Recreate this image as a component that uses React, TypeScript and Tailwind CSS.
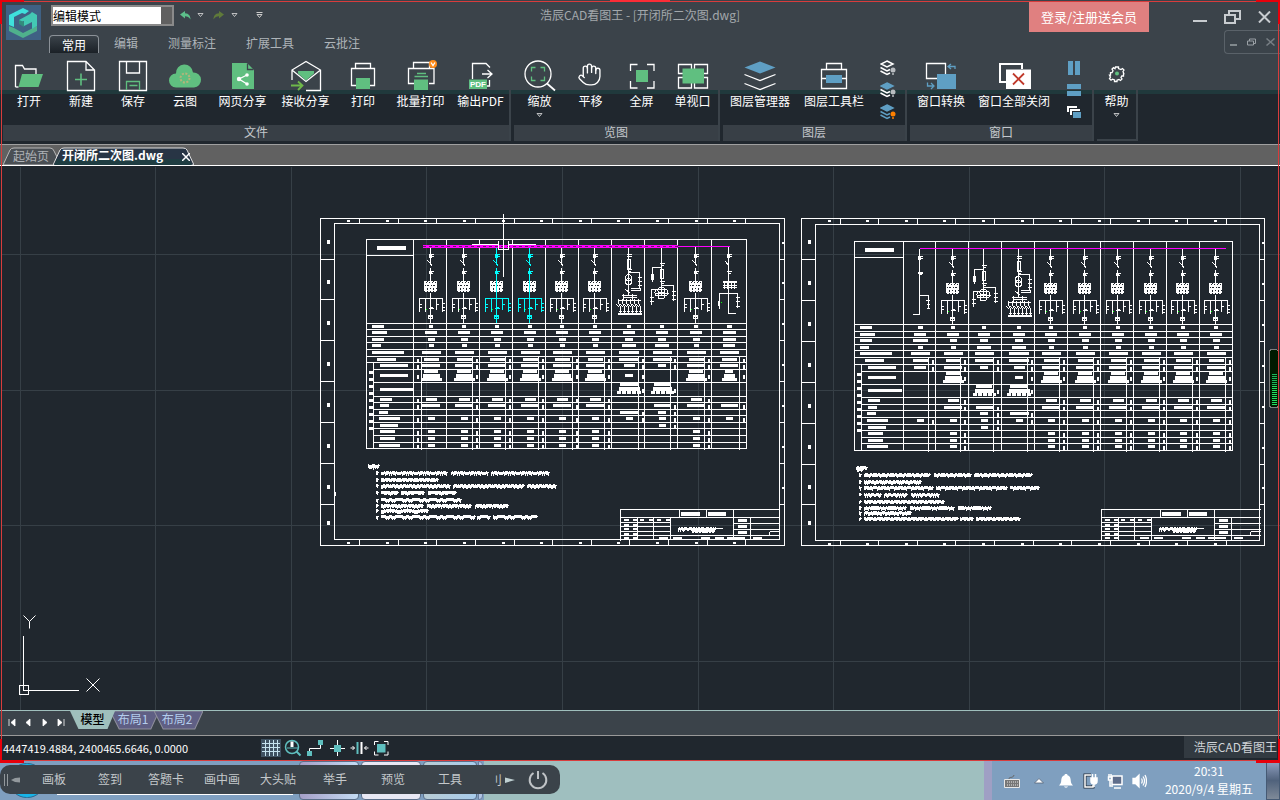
import React, { useState } from 'react';
import { Hand } from 'lucide-react';

type FeederKind = 'feeder' | 'pt' | 'transformer' | 'tail' | 'incoming';

interface Bay {
  x: number;
  kind: FeederKind;
  active?: boolean;
}

interface SheetData {
  outer: [number, number, number, number];
  inner: [number, number, number, number];
  ticks: number[];
  sideTicks: number[];
  left: number;
  right: number;
  top: number;
  labelLine: number;
  columns: number[];
  subColumns: number[];
  rows: number[];
  bays: Bay[];
  dy: number;
}

const sheets: SheetData[] = [
  {
    outer: [320, 218, 784, 545],
    inner: [334, 223, 779, 539],
    ticks: [359, 398, 436, 475, 514, 552, 591, 629, 668, 707, 745],
    sideTicks: [259, 299, 340, 381, 422, 463, 504],
    left: 366,
    right: 746,
    top: 239,
    labelLine: 255,
    columns: [413, 446, 479, 512, 545, 578, 611, 644, 677, 711],
    subColumns: [421, 472, 505, 538, 572, 604, 638, 670, 704, 739],
    rows: [323, 329, 336, 342, 349, 356, 362, 369, 382, 396, 402, 409, 415, 422, 428, 435, 442, 448],
    bays: [
      { x: 430, kind: 'feeder' },
      { x: 463, kind: 'feeder' },
      { x: 496, kind: 'feeder', active: true },
      { x: 529, kind: 'feeder', active: true },
      { x: 561, kind: 'feeder' },
      { x: 594, kind: 'feeder' },
      { x: 628, kind: 'pt' },
      { x: 661, kind: 'transformer' },
      { x: 695, kind: 'feeder' },
      { x: 728, kind: 'tail' },
    ],
    dy: 0,
  },
  {
    outer: [801, 218, 1264, 545],
    inner: [815, 224, 1259, 540],
    ticks: [840, 878, 917, 955, 994, 1033, 1071, 1110, 1149, 1187, 1226],
    sideTicks: [259, 300, 341, 382, 423, 464, 504],
    left: 854,
    right: 1232,
    top: 241,
    labelLine: 257,
    columns: [903, 935, 968, 1001, 1034, 1067, 1100, 1133, 1166, 1199],
    subColumns: [928, 960, 993, 1027, 1059, 1093, 1126, 1159, 1192, 1225],
    rows: [324, 331, 337, 344, 350, 357, 364, 371, 384, 397, 404, 410, 417, 424, 430, 437, 443, 450],
    bays: [
      { x: 919, kind: 'incoming' },
      { x: 952, kind: 'feeder' },
      { x: 983, kind: 'transformer' },
      { x: 1018, kind: 'pt' },
      { x: 1050, kind: 'feeder' },
      { x: 1084, kind: 'feeder' },
      { x: 1117, kind: 'feeder' },
      { x: 1150, kind: 'feeder' },
      { x: 1182, kind: 'feeder' },
      { x: 1215, kind: 'feeder' },
    ],
    dy: 2,
  },
];

// Width of the entry in each table row, 0 for an empty cell
const cellWidths: Record<FeederKind, number[]> = {
  feeder: [4, 12, 7, 5, 19, 15, 18, 20, 0, 11, 18, 0, 7, 0, 7, 7, 7],
  pt: [4, 12, 8, 14, 20, 20, 11, 8, 24, 0, 0, 19, 7, 0, 0, 0, 0],
  transformer: [4, 12, 8, 14, 19, 19, 8, 0, 22, 0, 17, 8, 7, 7, 0, 0, 0],
  tail: [5, 13, 13, 12, 19, 15, 18, 14, 0, 0, 17, 0, 7, 0, 0, 0, 0],
  incoming: [5, 12, 15, 5, 19, 15, 12, 0, 0, 0, 0, 0, 7, 0, 0, 0, 0],
};

const rowLabels = [
  [5, 12], [5, 15], [5, 12], [5, 9], [5, 32], [10, 19], [13, 28], [13, 28], [13, 34],
  [13, 12], [13, 9], [12, 9], [12, 21], [13, 18], [13, 15], [13, 15], [12, 21],
];

const noteLines: { y: number; parts: [number, number][] }[] = [
  { y: 472, parts: [[10, 12], [15, 81], [85, 122], [125, 183]] },
  { y: 479, parts: [[10, 12], [15, 72]] },
  { y: 485, parts: [[10, 12], [15, 84], [87, 158], [161, 190]] },
  { y: 492, parts: [[10, 12], [15, 32], [35, 58], [62, 90]] },
  { y: 499, parts: [[10, 12], [15, 95]] },
  { y: 505, parts: [[10, 12], [15, 57], [61, 105], [109, 142]] },
  { y: 510, parts: [[10, 12], [15, 62]] },
  { y: 516, parts: [[10, 12], [15, 109], [111, 124], [127, 171]] },
];

// Lettering too small to resolve at this zoom, drawn as vertical strokes
const scribble = (from: number, to: number, y: number) => {
  let d = `M${from} ${y}H${to}`;
  for (let x = from; x < to; x++) {
    const n = (x * x * 7 + x * 31 + y * 13) % 17;
    const top = y - (n > 11 ? 1 : 2);
    d += `M${x} ${top}v${n % 3 === 0 ? 3 : 4}`;
  }
  return d;
};

const Feeder: React.FC<{ x: number; color: string }> = ({ x, color }) => (
  <g stroke={color} fill="none">
    <path d={`M${x} 246V262M${x} 267V280M${x} 292V322`} />
    <path d={`M${x - 2} 254h5M${x - 2} 256h5M${x - 1} 253v4M${x + 1} 253v4M${x - 3} 260l2 2l3 4M${x - 2} 271h5M${x - 1} 273h3M${x + 1} 270v3M${x - 1} 270v3`} />
    <rect x={x - 6} y="281" width="12" height="10" fill="#fff" stroke="#fff" />
    <path
      d={`M${x - 5} 282h12M${x - 6} 285h13M${x - 4} 288h11M${x - 7} 291h14`}
      stroke="#20272e"
      strokeDasharray="1 2"
    />
    <path d={`M${x - 3} 280v12M${x + 3} 280v12`} stroke="#20272e" strokeDasharray="1 3" />
    {color !== '#fff' && <path d={`M${x} 280v12`} />}
    <path d={`M${x - 11} 311V298H${x + 12}V311M${x - 5} 298v13M${x + 6} 298v11`} />
    <path d={`M${x - 12} 304h3M${x - 12} 307h3M${x + 11} 303h3M${x + 11} 307h3M${x + 11} 310h3M${x + 5} 304h3M${x - 1} 307h3M${x - 2} 308h5`} />
    <path d={`M${x - 2} 315h4v3h-4zM${x - 3} 316h5`} />
    <path d={`M${x - 5} 309h1`} stroke="#00ff00" />
  </g>
);

const PtBay: React.FC<{ x: number }> = ({ x }) => (
  <g fill="none">
    <path d={`M${x} 246V295M${x - 2} 254h5M${x - 2} 256h5M${x - 1} 259h3v9h-3zM${x - 2} 269h5M${x - 1} 271h3`} />
    <circle cx={x} cy="277" r="3" />
    <circle cx={x} cy="281" r="3" />
    <path d={`M${x} 272H${x + 11}V288M${x + 9} 277h4M${x + 9} 281h4M${x + 9} 285h4M${x + 2} 288h10v2h-10M${x - 3} 289l5 4`} />
    <path d={`M${x - 7} 295h15M${x - 6} 297h14M${x - 5} 293v6M${x + 4} 293v6M${x - 10} 300h22`} />
    {[-10, -6, -2, 2, 6, 10].map(o => (
      <path key={o} d={`M${x + o} 298v4l2 5v5M${x + o - 2} 304l3 3M${x + o} 311h3`} />
    ))}
    <path d={`M${x - 11} 313h24`} strokeWidth="2" />
  </g>
);

const TransformerBay: React.FC<{ x: number }> = ({ x }) => (
  <g fill="none">
    <path d={`M${x} 246V292M${x - 2} 263h5M${x - 1} 265h3M${x - 1} 269h3v9h-3zM${x - 2} 281h5M${x - 1} 283h3`} />
    <path d={`M${x} 267H${x - 9}V281M${x - 10} 273v6M${x - 8} 273v6M${x} 285H${x + 12}V300M${x + 10} 291h4M${x + 10} 295h4M${x + 10} 299h4`} />
    <path d={`M${x - 4} 289H${x - 10}V304M${x - 12} 297h4M${x - 12} 301h4`} />
    <circle cx={x - 3} cy="292" r="3.5" />
    <circle cx={x + 3} cy="292" r="3.5" />
    <circle cx={x} cy="290" r="3.5" />
    <circle cx={x} cy="295" r="3.5" />
    <path d={`M${x - 6} 293h13`} />
  </g>
);

const TailBay: React.FC<{ x: number }> = ({ x }) => (
  <g fill="none">
    <path d={`M${x} 246V313H${x + 7}M${x - 2} 254h5M${x - 2} 256h5M${x - 1} 253v4M${x + 1} 253v4M${x - 3} 261l3 4M${x - 2} 271h5M${x - 1} 273h3`} />
    <path d={`M${x - 6} 281h14M${x - 6} 282h14M${x - 6} 285h14M${x - 6} 287h14M${x - 4} 280v8M${x - 1} 280v8M${x + 3} 280v8M${x + 6} 280v8`} />
    <path d={`M${x - 9} 308V293H${x + 9}V307M${x - 10} 300v5M${x + 7} 297h4M${x + 7} 301h4M${x + 7} 306h4`} />
    <path d={`M${x - 8} 302h1`} stroke="#00ff00" />
  </g>
);

const IncomingBay: React.FC<{ x: number }> = ({ x }) => (
  <path
    fill="none"
    d={`M${x} 246V312H${x - 7}M${x - 2} 254h5M${x - 2} 256h5M${x - 1} 253v4M${x + 1} 253v4M${x - 2} 270h5M${x - 2} 271h5M${x - 1} 272h3M${x} 293h9V306M${x + 6} 298h4M${x + 7} 302h3M${x + 7} 306h3`}
  />
);

const TitleBlock: React.FC<{ dx: number }> = ({ dx }) => (
  <g transform={`translate(${dx} 0)`}>
    <path
      fill="none"
      d="M620 540V509H779M620 517H779M620 522H670M620 526H670M620 531H670M620 535H779M637 517V539M653 517V539M670 517V539M679 509V517M706 509V517M733 509V539M750 517V539M733 523H779M733 529H779M769 531V535M769 531H779"
    />
    <g stroke="none" fill="#fff">
      <rect x="680" y="511" width="19" height="4" />
      <rect x="707" y="511" width="18" height="4" />
      {[518, 523, 527, 532, 536].map(y => (
        <React.Fragment key={y}>
          <rect x="623" y={y} width="5" height="2" />
          <rect x="632" y={y} width="4" height="2" />
        </React.Fragment>
      ))}
      {[639, 648, 656, 665].map(x => <rect key={x} x={x} y="518" width="4" height="2" />)}
      {[518, 524, 530].map(y => <rect key={y} x="737" y={y} width="9" height="3" />)}
      {[658, 672, 700, 714, 726, 735, 752].map(x => <rect key={x} x={x} y="536" width="9" height="2" />)}
    </g>
    <path d={scribble(678, 690, 528) + scribble(690, 716, 528) + scribble(692, 714, 530)} />
    <path d="M700 528h22" />
  </g>
);

const Sheet: React.FC<{ sheet: SheetData; dx: number }> = ({ sheet, dx }) => {
  const [ox, oy, ox2, oy2] = sheet.outer;
  const [ix, iy, ix2, iy2] = sheet.inner;
  const { left, right, rows, dy } = sheet;
  const bottom = rows[rows.length - 1];
  const busY = 246 + dy;

  return (
    <g stroke="#fff">
      <rect x={ox} y={oy} width={ox2 - ox} height={oy2 - oy} fill="none" />
      <rect x={ix} y={iy} width={ix2 - ix} height={iy2 - iy} fill="none" />
      {sheet.ticks.map(x => (
        <g key={x}>
          <path d={`M${x} ${oy}V${iy}M${x} ${iy2}V${oy2}`} />
          <path d={`M${x - 13} ${oy + 2}h3M${x - 13} ${iy2 + 3}h3`} strokeWidth="2" />
        </g>
      ))}
      {sheet.sideTicks.map(y => (
        <g key={y}>
          <path d={`M${ox} ${y}H${ix}M${ix2} ${y}H${ox2}`} />
          <path d={`M${ox + 8} ${y - 20}v4`} strokeWidth="3" />
          <path d={`M${ix2 + 3} ${y - 18}v2`} strokeWidth="2" />
        </g>
      ))}
      <path d={`M${ox + 8} 520v4`} strokeWidth="3" />

      <rect x={left} y={sheet.top} width={right - left} height={bottom - sheet.top} fill="none" />
      <path d={`M${left} ${sheet.labelLine}H${sheet.columns[0]}M${left + 7} ${rows[6]}V${bottom}`} />
      <path d={`M${left + 10} ${sheet.labelLine - 8}h29`} strokeWidth="4" />
      {sheet.columns.map(x => <path key={x} d={`M${x} ${sheet.top}V${bottom}`} />)}
      {sheet.subColumns.map(x => <path key={x} d={`M${x} ${rows[5]}V${bottom + 1}`} />)}
      {rows.map((y, i) => <path key={y} d={`M${i > 6 ? left + 7 : left} ${y}H${right}`} />)}
      {Array.from({ length: 9 }, (_, i) => (
        <path key={i} d={`M${left + 2} ${rows[7] + 3 + i * 7}h4`} strokeWidth="3" />
      ))}
      {rowLabels.map(([offset, width], i) => (
        <path key={i} d={`M${left + offset} ${(rows[i] + rows[i + 1]) >> 1}h${width}`} strokeWidth="3" />
      ))}

      {sheet.bays.map((bay, b) =>
        cellWidths[bay.kind].map((width, i) => {
          if (!width) return null;
          const y = (rows[i] + rows[i + 1]) >> 1;
          const half = width >> 1;
          const unitX = sheet.subColumns[b] + (b === 0 && !dx ? -4 : 4);
          const unit = i > 4 && (
            <path d={`M${unitX} ${y - 1}v4`} strokeWidth="2" />
          );
          if ((i === 7 || i === 8) && width > 8) {
            return (
              <g key={i}>
                <path d={`M${bay.x - half + 3} ${rows[i] + 2}h${width - 6}`} strokeWidth="3" />
                <path d={`M${bay.x - half + 2} ${rows[i] + 6}h${width - 3}`} strokeWidth="4" />
                <path d={`M${bay.x - half} ${rows[i] + 10}h${width + 1}`} strokeWidth="3" strokeDasharray={i === 8 ? '4 1' : undefined} />
                {unit}
              </g>
            );
          }
          return (
            <g key={i}>
              <path d={`M${bay.x - half} ${y}h${width}`} strokeWidth="3" />
              {unit}
            </g>
          );
        })
      )}

      <path d={scribble(left + 2, left + 13, 465 + dy) + scribble(left + 3, left + 10, 466 + dy)} />
      {noteLines.map(line => (
        <path key={line.y} d={line.parts.map(([a, b]) => scribble(left + a - (dx ? 5 : 0), left + b - (dx ? 5 : 0), line.y + dy)).join('')} />
      ))}

      <g transform={`translate(0 ${dy})`}>
        {sheet.bays.map(bay => {
          switch (bay.kind) {
            case 'pt': return <PtBay key={bay.x} x={bay.x} />;
            case 'transformer': return <TransformerBay key={bay.x} x={bay.x} />;
            case 'tail': return <TailBay key={bay.x} x={bay.x} />;
            case 'incoming': return <IncomingBay key={bay.x} x={bay.x} />;
            default: return <Feeder key={bay.x} x={bay.x} color={bay.active ? '#00ffff' : '#fff'} />;
          }
        })}
      </g>

      {dx ? (
        <path d={`M919 ${busY}H1225`} stroke="#ff00ff" />
      ) : (
        <>
          <path d={`M422 ${busY}H677`} stroke="#ff00ff" strokeWidth="3" />
          <path d={`M422 ${busY}H677`} stroke="#5c1f60" strokeDasharray="3 3" />
          <path d={`M677 ${busY}H729`} stroke="#ff00ff" />
        </>
      )}
      <TitleBlock dx={dx} />
    </g>
  );
};

const Drawing: React.FC = () => (
  <svg
    className="block h-full min-h-[544px] w-full"
    viewBox="0 166 1280 544"
    preserveAspectRatio="xMidYMid slice"
    shapeRendering="crispEdges"
    role="img"
    aria-label="开闭所二次图"
  >
    <g transform="translate(0.5 0.5)">
      <path
        stroke="#363f46"
        d="M20 166V710M155 166V710M291 166V710M426 166V710M562 166V710M698 166V710M833 166V710M969 166V710M1104 166V710M1240 166V710M0 254H1280M0 390H1280M0 525H1280M0 661H1280"
      />
      <Sheet sheet={sheets[0]} dx={0} />
      <Sheet sheet={sheets[1]} dx={481} />
      <path d="M335 491v4M815 493v3" stroke="#fff" />
      <g stroke="#fff" fill="none">
        <path d="M503 213V276M471 244H498M508 244H535M498 240v9h10v-9" />
      </g>
      <g stroke="#fff" fill="none">
        <path d="M23 635V690H78M19 685h9v9h-9z" />
        <path d="M23 615l6 6l6 -6M29 621v7M86 678l13 13M99 678l-13 13" shapeRendering="auto" />
      </g>
      <rect x="1269" y="349" width="9" height="58" rx="3" fill="#001a00" stroke="#808080" />
      {Array.from({ length: 16 }, (_, i) => (
        <path key={i} d={`M1271 ${374 + i * 2}h5`} stroke={i < 6 ? '#18b85a' : '#20e060'} />
      ))}
    </g>
  </svg>
);

const green = '#60bf80';
const blue = '#5f9fc4';

const RibbonIcon: React.FC<{ children: React.ReactNode }> = ({ children }) => (
  <svg width="32" height="32" viewBox="0 0 32 32" fill="none" stroke="#fff" strokeWidth="1.3" className="shrink-0 overflow-visible" aria-hidden="true">
    {children}
  </svg>
);

interface Tool {
  label: string;
  icon: React.ReactNode;
  width: string;
  menu?: boolean;
}

const fileTools: Tool[] = [
  {
    label: '打开',
    width: 'w-[52px]',
    icon: <><path d="M2.5 27V5.500h7l2 3.500h11.500v5" /><path d="M2.500 27h3" /><path d="M9 14H30L25.500 27H5.500z" fill={green} stroke="none" /></>,
  },
  {
    label: '新建',
    width: 'w-[52px]',
    icon: <><path d="M2.500 1.500H21L29.500 10V30.500H2.500zM21 1.500V10H29.500" /><path d="M16 13.500v12M10 19.500h12" stroke={green} strokeWidth="1.600" /></>,
  },
  {
    label: '保存',
    width: 'w-[52px]',
    icon: <><path d="M2.500 1.500h27v29h-27zM9.500 1.500v11.500h13V1.500" /><path d="M9.500 30V21.500h13V30M12.500 25.500h8" stroke={green} /></>,
  },
  {
    label: '云图',
    width: 'w-[52px]',
    icon: <><path d="M7 27.500a7 7 0 0 1 0-14 8.500 8.500 0 0 1 17-1 7.500 7.500 0 0 1 1 15z" fill={green} stroke="none" /><circle cx="16" cy="18" r="4.500" stroke="#b5b57a" strokeWidth="2" strokeDasharray="2 1.500" /></>,
  },
  {
    label: '网页分享',
    width: 'w-[63px]',
    icon: <><path d="M5 3H20L27 10V29H5z" fill={green} stroke="none" /><path d="M20.500 3.500v6h6" stroke="#3b434a" /><path d="M20 15l-8 4 8 5" /><circle cx="20" cy="15" r="1.800" fill="#fff" stroke="none" /><circle cx="12" cy="19" r="2.200" fill="#fff" stroke="none" /><circle cx="20" cy="24" r="1.800" fill="#fff" stroke="none" /></>,
  },
  {
    label: '接收分享',
    width: 'w-[63px]',
    icon: <><path d="M2 20V10L16 1.500L30.500 10V30.500H16M2 10l14 11.500L30.500 10" /><path d="M8 11H24V13.500L16 20.500L8 13.500z" fill={green} stroke="none" /><path d="M1 25.500H12M8 21.500l4.500 4-4.500 4.500" stroke="#6fb84a" strokeWidth="1.800" /></>,
  },
  {
    label: '打印',
    width: 'w-[52px]',
    icon: <><path d="M8.500 8.500V3.500h15v5M9 25.500H4.500v-17h23v17H23" /><path d="M9 18h14v11H9z" fill={green} stroke="none" /></>,
  },
  {
    label: '批量打印',
    width: 'w-[63px]',
    icon: <><path d="M8.500 8.500V2.500h16v6M9 23.500H3.500v-15h25.500v15H24" /><path d="M12 13.500h9M9.500 16.500h13.500" stroke={green} /><path d="M9 19.500h14V30H9z" fill={green} stroke="none" /><circle cx="28" cy="4" r="4" fill="#ff8c1a" stroke="none" /><path d="M26 2.500l2 3 2-3" /></>,
  },
  {
    label: '输出PDF',
    width: 'w-[57px]',
    icon: <><path d="M7.500 19V3.500H21l4 4M24.500 20v6H22M17 14h10M22.500 10l4.500 4-4.500 4" /><path d="M4 19.500h18V29H4z" fill={green} stroke="none" /><text x="5" y="27" fontSize="8" fontWeight="700" fill="#fff" stroke="none" fontFamily="Liberation Sans">PDF</text></>,
  },
];

const viewTools: Tool[] = [
  {
    label: '缩放',
    width: 'w-[51px]',
    menu: true,
    icon: <><circle cx="14" cy="14" r="13" /><path d="M23 23.500l8 7" strokeWidth="1.700" /><path d="M7.500 11.500v-4h4M16.500 7.500h4v4M20.500 16.500v4h-4M11.500 20.500h-4v-4" stroke={green} /></>,
  },
  { label: '平移', width: 'w-[51px]', icon: <Hand x={2} y={2} width={25} height={25} strokeWidth={1.3} /> },
  {
    label: '全屏',
    width: 'w-[51px]',
    icon: <><path d="M4.500 11v-6.500h7M21 4.500h7V11M28 21v7h-7M11.500 28h-7v-7" /><path d="M10 10h12v12H10z" fill={green} stroke="none" /></>,
  },
  {
    label: '单视口',
    width: 'w-[51px]',
    icon: <><path d="M1.500 4.500h13v9h-13zM17.500 4.500h13v9h-13zM1.500 17.500h13V28h-13zM17.500 17.500h13V28h-13z" /><path d="M5.500 8.500h21.500v15H5.500z" fill={green} stroke="none" /></>,
  },
];

const layerTools: Tool[] = [
  {
    label: '图层管理器',
    width: 'w-[74px]',
    icon: <><path d="M16 1.500L31.500 7.500L16 13.500L.500 7.500z" fill={blue} stroke="none" /><path d="M.500 14.500L16 20.500L31.500 14.500M.500 23.500L16 29.500L31.500 23.500" /></>,
  },
  {
    label: '图层工具栏',
    width: 'w-[74px]',
    icon: <><path d="M3.500 9.500h25v19h-25zM8.500 9.500v-6h15v6M3.500 18.500h25" /><path d="M8 15h16v8H8z" fill={blue} stroke="none" /></>,
  },
];

const windowTools: Tool[] = [
  {
    label: '窗口转换',
    width: 'w-[62px]',
    icon: <><path d="M12 18.500H1.500V3.500h19V14" /><path d="M12 14h19v15H12z" fill={blue} stroke="none" /><path d="M30 9V6.500h-6M26 4l-3 2.500L26 9M2.500 22.500V26H8M6 23l3 3-3 3" stroke={blue} /></>,
  },
  {
    label: '窗口全部关闭',
    width: 'w-[84px]',
    icon: <><path d="M8 22H2V4h22v5" strokeWidth="2" /><path d="M8 9.500h25V29H8z" fill="#fff" stroke="none" /><path d="M15 13.500l11 11M26 13.500l-11 11" stroke="#c0392b" strokeWidth="1.800" /></>,
  },
];

const helpTools: Tool[] = [
  {
    label: '帮助',
    width: 'w-[39px]',
    menu: true,
    icon: <><path d="M14.500 7h3v1.500l2.500 1 1.500-1 1.500 1.500-1 1.500.8 2H22.500v2.500h-1.700l-.8 1.500 1 1.500-1.500 1.500-1.500-1-2 .8v1.200h-2.500v-1.500l-2-.8-1.500 1-1.500-1.500 1-1.500-1-2H9.500v-2.500h1.500l1-2-1-1.500 1.500-1.500 1.500 1z" /><circle cx="16" cy="13.500" r="2" fill={green} stroke="none" /></>,
  },
];

const DownArrow: React.FC = () => (
  <svg width="7" height="5" viewBox="0 0 7 5" aria-hidden="true"><path d="M1 .500h5L3.500 3.500z" fill="#3b434a" stroke="#ddd" strokeWidth=".8" /></svg>
);

const ToolButton: React.FC<{ tool: Tool }> = ({ tool }) => (
  <button className={`${tool.width} flex flex-col items-center pt-1 text-white whitespace-nowrap hover:bg-white/10`}>
    <RibbonIcon>{tool.icon}</RibbonIcon>
    <span className="leading-[18px]">{tool.label}</span>
    {tool.menu && <span className="pt-[3px]"><DownArrow /></span>}
  </button>
);

const RibbonGroup: React.FC<{ title?: string; tools: Tool[]; children?: React.ReactNode }> = ({ title, tools, children }) => (
  <section className="mr-[3px] flex flex-col border-r-2 border-[#3b434a]">
    <div className="flex h-[69px]">
      {tools.map(tool => <ToolButton key={tool.label} tool={tool} />)}
      {children}
    </div>
    {title ? (
      <h2 className="h-4 bg-[#383f46] text-center leading-[14px] text-[#c4c8cc]">{title}</h2>
    ) : (
      <div className="h-4 border-b-2 border-[#3b434a]" />
    )}
  </section>
);

const LayerMini: React.FC<{ label: string; top: string; line: string; bulb: string }> = ({ label, top, line, bulb }) => (
  <button aria-label={label}>
    <svg width="16" height="16" viewBox="0 0 16 16" fill="none" stroke={line} strokeWidth="1.500">
      <path d="M7 1L13 4L7 7L1 4z" fill={top} stroke={top === 'none' ? line : top} />
      <path d="M.500 7.500L7 11L10 9.500M.500 11L7 14.500L10 13" />
      <circle cx="13" cy="10" r="2.500" fill={bulb} stroke="none" />
      <path d="M12 14h2" stroke={bulb} />
    </svg>
  </button>
);

const TitleBar: React.FC = () => {
  const [tab, setTab] = useState('常用');
  const [mode, setMode] = useState('编辑模式');

  return (
    <div className="grid h-14 grid-cols-[1fr_auto_1fr]">
      <div className="flex pt-[5px] pl-[6px]">
        <svg width="35" height="35" viewBox="0 0 35 35" className="shrink-0" aria-label="浩辰CAD看图王">
          <rect width="35" height="35" fill="#3f6184" />
          <path d="M3 10L17 3L23 6L19 9L16 8L8 12V22L3 20z" fill="#3fe0dc" />
          <path d="M3 21L8 23L17 28L31 21V26L17 33L3 26z" fill="#4fb08c" />
          <path d="M26 7L31 10V21L26 24V17L18 21V16L13 18V15L24 9z" fill="#43c8b4" />
          <path d="M13 15l5 2v5l-5-3z" fill="#328a7c" />
        </svg>
        <div className="ml-2">
          <div className="flex h-[21px] items-center pl-0.5">
            <div className="relative">
              <select
                aria-label="工作模式"
                value={mode}
                onChange={e => setMode(e.target.value)}
                className="block h-[21px] w-[123px] appearance-none border-2 border-[#8a8a8a] bg-white text-black"
              >
                <option>编辑模式</option>
                <option>览图模式</option>
              </select>
              <span className="pointer-events-none absolute inset-y-0.5 right-0.5 w-[11px] bg-[#606060]" />
            </div>
            <button aria-label="撤销" className="ml-[6px]">
              <svg width="11" height="9" viewBox="0 0 11 9"><path d="M0 3.500L5 0v2.200C9 2.500 10.500 5 10.500 8.500 9 6 7.500 5.300 5 5.300V7.500z" fill="#5cbf8a" /></svg>
            </button>
            <button aria-label="撤销列表" className="ml-[6px]"><DownArrow /></button>
            <button aria-label="重做" className="ml-[9px]">
              <svg width="11" height="9" viewBox="0 0 11 9"><path d="M11 3.500L6 0v2.200C2 2.500.5 5 .5 8.500 2 6 3.500 5.300 6 5.300V7.500z" fill="#5f7a3a" /></svg>
            </button>
            <button aria-label="重做列表" className="ml-[7px]"><DownArrow /></button>
            <button aria-label="自定义快速访问" className="ml-[18px]">
              <svg width="7" height="7" viewBox="0 0 7 7" fill="none" stroke="#ccc"><path d="M.500 .500h6M1 2.500h5L3.500 5.500z" /></svg>
            </button>
          </div>
          <nav className="mt-[9px] flex h-[18px] leading-4 whitespace-nowrap">
            {['常用', '编辑', '测量标注', '扩展工具', '云批注'].map(name => (
              <button
                key={name}
                onClick={() => setTab(name)}
                className={
                  name === tab
                    ? 'rounded-t border border-b-0 border-[#8b9197] bg-linear-to-b from-[#3b434a] to-[#1b2127] px-[12px] leading-[14px] text-white'
                    : 'px-[15px] pb-0.5 text-[#aeb4b9]'
                }
              >
                {name}
              </button>
            ))}
          </nav>
        </div>
      </div>

      <h1 className="pt-[6px] leading-[18px] whitespace-nowrap text-[#a3a8ac]">浩辰CAD看图王 - [开闭所二次图.dwg]</h1>

      <div className="flex flex-col items-end">
        <div className="flex pt-0.5 pr-[9px]">
          <button className="h-[30px] w-[120px] bg-[#e08080] text-[13px] text-white">登录/注册送会员</button>
          <div className="ml-[43px] flex items-center gap-[17px]">
            <button aria-label="最小化"><svg width="15" height="14" viewBox="0 0 15 14"><path d="M1 11h14" stroke="#c8ccd0" strokeWidth="2" /></svg></button>
            <button aria-label="还原"><svg width="17" height="14" viewBox="0 0 17 14" fill="none" stroke="#c8ccd0" strokeWidth="2"><path d="M1 5h10v8H1zM5 5V1h11v8h-5" /></svg></button>
            <button aria-label="关闭"><svg width="13" height="12" viewBox="0 0 13 12" stroke="#c8ccd0" strokeWidth="2"><path d="M1 .500l11 11M12 .500l-11 11" /></svg></button>
          </div>
        </div>
        <div className="-mt-0.5 flex h-6 w-[56px] items-center justify-between rounded-l border border-r-0 border-[#5a6269] pr-[5px] pl-1">
          <button aria-label="最小化图纸"><svg width="8" height="8" viewBox="0 0 8 8"><path d="M1 7h7" stroke="#9aa0a5" strokeWidth="1.500" /></svg></button>
          <button aria-label="还原图纸"><svg width="9" height="8" viewBox="0 0 9 8" fill="none" stroke="#9aa0a5"><path d="M.500 3h6v4h-6zM2.500 3V1h6v4.500h-2" /></svg></button>
          <button aria-label="关闭图纸"><svg width="9" height="8" viewBox="0 0 9 8" stroke="#777e84" strokeWidth="1.500"><path d="M.500 .500l8 7M8.500 .500l-8 7" /></svg></button>
        </div>
      </div>
    </div>
  );
};

const FileTabs: React.FC = () => (
  <div className="flex h-[22px] items-end border-t border-b border-t-[#a0a0a0] border-b-white bg-[#616161] pl-[3px]">
    <button className="relative h-[18px] w-[54px] pl-[10px] text-left leading-4 text-[#b0b4b8]">
      <svg className="absolute inset-0 h-full w-full" viewBox="0 0 54 18" preserveAspectRatio="none" aria-hidden="true">
        <path d="M0 18L7 3Q8 1 11 1H47Q50 1 51 4L54 10V18z" fill="#4a4f54" stroke="#b8b8b8" />
      </svg>
      <span className="relative">起始页</span>
    </button>
    <div className="relative -ml-[4px] flex h-[18px] w-[141px] justify-between pr-1 pl-[9px] leading-4 text-white">
      <svg className="absolute inset-0 h-full w-full" viewBox="0 0 141 18" preserveAspectRatio="none" aria-hidden="true">
        <path d="M0 18L7 3Q8 1 11 1H130Q133 1 134 3L141 18z" fill="#283545" stroke="#e0e0e0" />
        <path d="M4 12H136L139 18H1z" fill="#1f3d42" />
      </svg>
      <button className="relative pb-0.5 font-bold whitespace-nowrap">开闭所二次图.dwg</button>
      <button aria-label="关闭标签" className="relative pt-0.5">
        <svg width="8" height="8" viewBox="0 0 8 8" stroke="#fff" strokeWidth="1.500"><path d="M0 0l8 8M8 0l-8 8" /></svg>
      </button>
    </div>
  </div>
);

const LayoutTab: React.FC<{ label: string; current?: boolean }> = ({ label, current }) => (
  <button className={`relative -mr-[5px] h-[19px] pb-[3px] leading-4 ${current ? 'z-10 w-[45px] text-black font-medium' : 'w-[49px] pr-[3px] text-[#b4cdec]'}`}>
    <svg className="absolute inset-0 h-full w-full" viewBox="0 0 48 19" preserveAspectRatio="none" aria-hidden="true">
      <path d="M0 0H48L40 18H9z" fill={current ? '#9fbfbc' : '#5f5f84'} stroke={current ? 'none' : '#8f8f9c'} />
    </svg>
    <span className="relative">{label}</span>
  </button>
);

const LayoutBar: React.FC = () => (
  <div className="flex h-[26px] items-start border-t border-b border-t-[#9fbfbc] border-b-[#999] bg-[#3b434a] pl-2">
    <div className="flex h-[23px] w-[62px] items-center justify-between pr-[5px]">
      {[
        ['第一个', 'M1 1v7M7 1v7L3 4.500z'],
        ['上一个', 'M6 1v7L2 4.500z'],
        ['下一个', 'M3 1v7L7 4.500z'],
        ['最后一个', 'M8 1v7M2 1v7L6 4.500z'],
      ].map(([label, d]) => (
        <button key={label} aria-label={label}>
          <svg width="9" height="9" viewBox="0 0 9 9" fill="#fff" stroke="#fff"><path d={d} strokeWidth=".8" /></svg>
        </button>
      ))}
    </div>
    <LayoutTab label="模型" current />
    <LayoutTab label="布局1" />
    <LayoutTab label="布局2" />
  </div>
);

const teal = '#5fbfbf';

const statusIcons: { label: string; icon: React.ReactNode; on?: boolean }[] = [
  { label: '栅格', on: true, icon: <path d="M4.500 1v16M8.500 1v16M12.500 1v16M16.500 1v16M1 4.500h18M1 8.500h18M1 12.500h18" stroke="#c5e2ee" /> },
  { label: '缩放', icon: <><circle cx="9" cy="8" r="6.500" stroke={teal} strokeWidth="1.500" /><path d="M9 8V2.500" stroke="#fff" strokeWidth="3" /><path d="M4 9h11" stroke={teal} /><path d="M13.500 12.500l4 4" stroke={teal} strokeWidth="2" /></> },
  { label: '多段线', icon: <><path d="M4.500 12V9.500h11V5" stroke="#fff" /><path d="M2 12h5v5H2zM13 1h5v5h-5z" fill={teal} /></> },
  { label: '捕捉', icon: <><path d="M10.500 1v16M3 9.500h15" stroke="#fff" /><path d="M7 6h7v7H7z" fill={teal} /></> },
  { label: '线宽', icon: <><path d="M8.500 3v12" stroke={teal} strokeWidth="2" /><path d="M12.500 3v12" stroke="#fff" strokeWidth="2" /><path d="M1.500 9h4M3.500 7l2 2-2 2M19.500 9h-4M17.500 7l-2 2 2 2" stroke="#fff" /></> },
  { label: '全屏', icon: <><path d="M3.500 6v-3.500h4M13 2.500h4V6M17 12.500v3.500h-4M7.500 16h-4v-3.500" stroke="#fff" /><path d="M6 5h8.500v8.500H6z" fill={teal} /></> },
];

const StatusBar: React.FC = () => (
  <div className="relative flex h-[25px] items-center bg-[#20272e] pr-[3px] pb-px pl-[3px] text-white">
    <span className="w-[258px] text-[11px] whitespace-nowrap">4447419.4884, 2400465.6646, 0.0000</span>
    <div className="flex gap-0.5">
      {statusIcons.map((item, i) => (
        <button key={i} aria-label={item.label} className={item.on ? 'bg-[#3f5262]' : ''}>
          <svg width="20" height="18" viewBox="0 0 20 18" fill="none">{item.icon}</svg>
        </button>
      ))}
    </div>
    <span className="ml-auto self-start bg-[#323a41] py-0.5 pl-[10px] leading-[18px] text-[#d0d4d8]">浩辰CAD看图王</span>
  </div>
);

const toolbarItems: [string, string][] = [
  ['画板', 'w-14'],
  ['签到', 'w-14'],
  ['答题卡', 'w-14'],
  ['画中画', 'w-14'],
  ['大头贴', 'w-14'],
  ['举手', 'w-[58px]'],
  ['预览', 'w-[58px]'],
  ['工具', 'w-14'],
];

const FloatingToolbar: React.FC = () => (
  <div className="absolute top-1 left-0 flex h-[29px] w-[560px] items-center rounded-[10px] bg-[#3b434a] text-[#c4c8ca]">
    <svg width="26" height="29" viewBox="0 0 26 29" aria-hidden="true">
      <path d="M4.500 9v12M7.500 9v12" stroke="#92989c" />
      <path d="M11 15l4-2 5-.5v5l-5-.5z" fill="#92989c" />
    </svg>
    {toolbarItems.map(([label, width]) => (
      <button key={label} className={`${width} h-full pb-0.5`}>{label}</button>
    ))}
    <span className="ml-[12px] w-[14px] overflow-hidden">刂</span>
    <svg width="10" height="8" viewBox="0 0 10 8" className="ml-px" aria-hidden="true"><path d="M0 1.500L10 4L0 7z" fill="#bfd0d2" /></svg>
    <button aria-label="退出" className="ml-[13px]">
      <svg width="20" height="20" viewBox="0 0 20 20" fill="none" stroke="#bfc3c6" strokeWidth="2">
        <path d="M5.500 3a8.300 8.300 0 1 0 9 0M10 1v8" />
      </svg>
    </button>
  </div>
);

const Taskbar: React.FC = () => (
  <footer className="relative flex h-[39px] bg-[#9fbfbf]">
    <div className="flex w-[484px] bg-[#7f9fc0]">
      <span className="mt-0.5 ml-[9px] h-[35px] w-[36px] rounded-full border border-[#2a6a90] bg-[#18b4e8]" />
      <span className="mt-auto mb-[5px] ml-[12px] h-px w-[236px] bg-white" />
      <span className="ml-[6px] w-[60px] rounded border border-[#5a6f8a] bg-linear-to-r from-[#a5a0c8] to-[#c4dcf4]" />
      <span className="ml-[2px] w-[60px] rounded border border-[#5a6f8a] bg-[#e8e8f4]" />
      <span className="ml-[2px] w-[54px] rounded border border-[#5a6f8a] bg-linear-to-r from-[#b8ccd4] to-[#a8ccec]" />
      <span className="ml-px w-[5px] rounded-r border border-[#6a7fa0] bg-[#b0c4e4]" />
    </div>
    <FloatingToolbar />
    <div className="ml-auto flex items-center border-l-8 border-[#9f9fc4] bg-[#7f9fbf] text-white">
      <div className="ml-[12px] flex items-center gap-[9px]" aria-hidden="true">
        <svg width="16" height="14" viewBox="0 0 16 14" fill="none" stroke="#e8e8e8"><path d="M.500 5.500h15v8H.500z" fill="#777" /><path d="M3 8h11M3 11h11" strokeDasharray="1 1" /><path d="M5 5c0-3 4 0 5-4" stroke="#666" /></svg>
        <svg width="20" height="8" viewBox="0 0 20 8"><path d="M10 1.500l4.500 4.500h-9z" fill="#fff" stroke="#56657a" strokeWidth=".8" /></svg>
        <svg width="16" height="16" viewBox="0 0 16 16" fill="#fff"><path d="M8 1c1 0 1.500.5 1.500 1.300C12 3 12.700 5 12.800 8c0 2 1 3 2.200 4.500H1C2.200 11 3.200 10 3.200 8c.1-3 .8-5 3.300-5.700C6.500 1.500 7 1 8 1zM6 13.500h4c-.5 1.500-3.500 1.500-4 0z" /></svg>
        <svg width="15" height="17" viewBox="0 0 15 17" fill="none" stroke="#fff" strokeWidth="1.500"><path d="M8 3H2v12h8v-2" stroke="#26303c" strokeWidth="3" /><path d="M8 3H2v12h8v-2" /><path d="M8 6h6v3q0 3-3 3t-3-3zM9.500 6V2M12.500 6V2M11 12v3" fill="#fff" /></svg>
        <svg width="16" height="16" viewBox="0 0 16 16" fill="none" stroke="#fff" strokeWidth="1.500"><path d="M5 3h10v8.500H5zM7 15h7" fill="#5e6d8b" /><path d="M2 1v3M4 1v3M1.500 4h3v3h-3zM3 7v6h3" /></svg>
        <svg width="15" height="16" viewBox="0 0 15 16" fill="none" stroke="#fff" strokeWidth="1.300"><path d="M1 5.500h2.500L7 2v12L3.500 10.500H1z" fill="#fff" /><path d="M9.500 5.500q1.500 2.500 0 5M11 3.500q3 4.500 0 9M13 2q3 6 0 12" /></svg>
      </div>
      <time dateTime="2020-09-04T20:31" className="ml-[18px] pb-0.5 text-center leading-[18px] whitespace-nowrap">
        20:31
        <br />
        2020/9/4 星期五
      </time>
      <button aria-label="显示桌面" className="ml-[13px] h-full w-[14px] border border-[#465a74] bg-linear-to-b from-[#8f9fc0] via-[#50627c] to-[#7f8a98]" />
    </div>
  </footer>
);

// Red capture frame with thick corner marks
const CaptureFrame: React.FC = () => (
  <div className="pointer-events-none absolute inset-x-px top-px bottom-0 border border-[#d83c3c]" aria-hidden="true">
    <span className="absolute -top-0.5 -left-0.5 h-6 w-6 border-t-2 border-l-2 border-red-600" />
    <span className="absolute -top-0.5 -right-0.5 h-6 w-6 border-t-2 border-r-2 border-red-600" />
    <span className="absolute -bottom-[3px] -left-0.5 h-6 w-6 border-b-[3px] border-l-2 border-red-600" />
    <span className="absolute -right-0.5 -bottom-[3px] h-6 w-6 border-r-2 border-b-[3px] border-red-600" />
    <span className="absolute -top-0.5 left-1/2 h-0.5 w-[60px] -translate-x-1/2 bg-red-500" />
  </div>
);

const App: React.FC = () => (
  <div className="flex min-h-screen flex-col overflow-x-hidden bg-[#20272e] font-['Noto_Sans_CJK_SC',sans-serif] text-[12px]">
    <div className="relative z-10 flex flex-1 flex-col">
      <header className="h-36 bg-[linear-gradient(#3b434a_90px,#20393c_90px,#20393c_94px,#20272e_94px)]">
        <TitleBar />
        <div className="flex pl-[3px]">
          <RibbonGroup title="文件" tools={fileTools} />
          <RibbonGroup title="览图" tools={viewTools} />
          <RibbonGroup title="图层" tools={layerTools}>
            <div className="flex w-[34px] flex-col items-center gap-[6px] pt-1">
              <LayerMini label="关闭图层" top="none" line="#fff" bulb="#b8bcc0" />
              <LayerMini label="隔离图层" top={blue} line="#fff" bulb="#b8bcc0" />
              <LayerMini label="打开图层" top={blue} line={blue} bulb="#ff8000" />
            </div>
          </RibbonGroup>
          <RibbonGroup title="窗口" tools={windowTools}>
            <div className="flex w-[36px] flex-col items-center gap-[6px] pt-1">
              <button aria-label="垂直平铺"><svg width="16" height="16" viewBox="0 0 16 16" fill={blue}><path d="M2 1h5v14H2zM9 1h5v14H9z" /></svg></button>
              <button aria-label="水平平铺"><svg width="16" height="16" viewBox="0 0 16 16" fill={blue}><path d="M1 2h14v5H1zM1 9h14v5H1z" /></svg></button>
              <button aria-label="层叠"><svg width="16" height="16" viewBox="0 0 16 16" fill="none" stroke="#fff" strokeWidth="2"><path d="M2 8V3h9M5 11V6h9" /><path d="M7 8h8v6H7z" fill={blue} stroke="none" /></svg></button>
            </div>
          </RibbonGroup>
          <RibbonGroup tools={helpTools} />
        </div>
      </header>
      <FileTabs />
      <main className="min-h-[544px] flex-1">
        <Drawing />
      </main>
      <LayoutBar />
      <StatusBar />
      <CaptureFrame />
    </div>
    <Taskbar />
  </div>
);

export default App;
